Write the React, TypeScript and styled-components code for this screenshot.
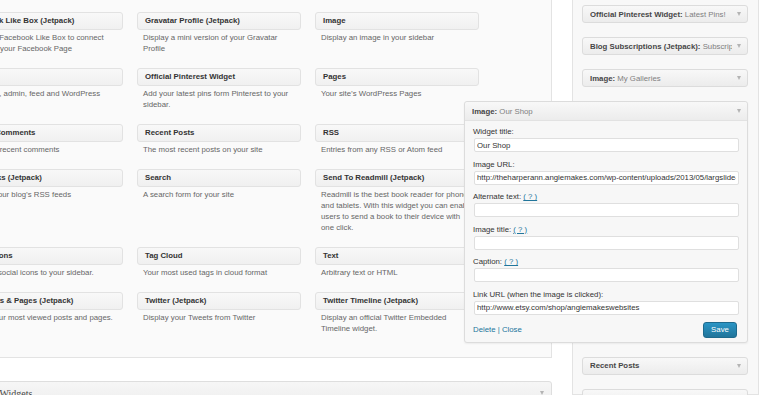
import React from "react";
import styled, { createGlobalStyle } from "styled-components";

const GlobalStyles = createGlobalStyle`
  html, body {
    margin: 0;
    padding: 0;
    background: #fff;
  }
  body {
    font-family: "Liberation Sans", Arial, sans-serif;
    font-size: 7.8px;
    color: #333;
    overflow: hidden;
  }
`;

type Widget = { title: string; desc: string };

const availableWidgets: Widget[] = [
  { title: "Facebook Like Box (Jetpack)", desc: "Display a Facebook Like Box to connect visitors to your Facebook Page" },
  { title: "Gravatar Profile (Jetpack)", desc: "Display a mini version of your Gravatar Profile" },
  { title: "Image", desc: "Display an image in your sidebar" },
  { title: "Meta", desc: "Log in/out, admin, feed and WordPress links" },
  { title: "Official Pinterest Widget", desc: "Add your latest pins form Pinterest to your sidebar." },
  { title: "Pages", desc: "Your site\u2019s WordPress Pages" },
  { title: "Recent Comments", desc: "The most recent comments" },
  { title: "Recent Posts", desc: "The most recent posts on your site" },
  { title: "RSS", desc: "Entries from any RSS or Atom feed" },
  { title: "RSS Links (Jetpack)", desc: "Links to your blog\u2019s RSS feeds" },
  { title: "Search", desc: "A search form for your site" },
  {
    title: "Send To Readmill (Jetpack)",
    desc: "Readmill is the best book reader for phones and tablets. With this widget you can enable users to send a book to their device with one click."
  },
  { title: "Social Icons", desc: "Adds the social icons to your sidebar." },
  { title: "Tag Cloud", desc: "Your most used tags in cloud format" },
  { title: "Text", desc: "Arbitrary text or HTML" },
  { title: "Top Posts & Pages (Jetpack)", desc: "Shows your most viewed posts and pages." },
  { title: "Twitter (Jetpack)", desc: "Display your Tweets from Twitter" },
  { title: "Twitter Timeline (Jetpack)", desc: "Display an official Twitter Embedded Timeline widget." }
];

type Field = { label: string; help?: boolean; value: string };

const imageFields: Field[] = [
  { label: "Widget title:", value: "Our Shop" },
  { label: "Image URL:", value: "http://theharperann.angiemakes.com/wp-content/uploads/2013/05/largslide-shop.jpg" },
  { label: "Alternate text:", help: true, value: "" },
  { label: "Image title:", help: true, value: "" },
  { label: "Caption:", help: true, value: "" },
  { label: "Link URL (when the image is clicked):", value: "http://www.etsy.com/shop/angiemakeswebsites" }
];

const App = () => (
  <>
    <GlobalStyles />
    <Page>
      <LeftColumn>
        <WidgetPanel>
          <WidgetGrid>
            {availableWidgets.map((w) => (
              <WidgetCard key={w.title}>
                <WidgetTitle>{w.title}</WidgetTitle>
                <WidgetDesc>{w.desc}</WidgetDesc>
              </WidgetCard>
            ))}
          </WidgetGrid>
        </WidgetPanel>

        <InactiveBar>
          <InactiveTitle>Inactive Widgets</InactiveTitle>
          <Arrow />
        </InactiveBar>
      </LeftColumn>

      <Sidebar>
        <SidebarWidget>
          <SidebarTitle>
            <b>Official Pinterest Widget:</b> <Sub>Latest Pins!</Sub>
          </SidebarTitle>
          <Arrow />
        </SidebarWidget>
        <SidebarWidget>
          <SidebarTitle>
            <b>Blog Subscriptions (Jetpack):</b> <Sub>Subscriptions</Sub>
          </SidebarTitle>
          <Arrow />
        </SidebarWidget>
        <SidebarWidget>
          <SidebarTitle>
            <b>Image:</b> <Sub>My Galleries</Sub>
          </SidebarTitle>
          <Arrow />
        </SidebarWidget>

        <OpenWidget>
          <OpenWidgetHeader>
            <SidebarTitle>
              <b>Image:</b> <Sub>Our Shop</Sub>
            </SidebarTitle>
            <Arrow />
          </OpenWidgetHeader>
          <OpenWidgetBody>
            {imageFields.map((f) => (
              <FieldRow key={f.label}>
                <FieldLabel>
                  {f.label}
                  {f.help && (
                    <>
                      {" "}
                      <HelpLink href="#">( ? )</HelpLink>
                    </>
                  )}
                </FieldLabel>
                <FieldInput type="text" defaultValue={f.value} readOnly />
              </FieldRow>
            ))}
            <Actions>
              <ActionLinks>
                <ActionLink href="#">Delete</ActionLink> | <ActionLink href="#">Close</ActionLink>
              </ActionLinks>
              <SaveButton>Save</SaveButton>
            </Actions>
          </OpenWidgetBody>
        </OpenWidget>

        <SidebarWidget>
          <SidebarTitle>
            <b>Recent Posts</b>
          </SidebarTitle>
          <Arrow />
        </SidebarWidget>
        <SidebarWidget>
          <SidebarTitle>
            <b>Text:</b> <Sub>About</Sub>
          </SidebarTitle>
          <Arrow />
        </SidebarWidget>
      </Sidebar>
    </Page>
  </>
);
export default App;

const Page = styled.div`
  display: flex;
  align-items: flex-start;
  width: 768px;
  height: 395px;
  overflow: hidden;
  background: #fff;
`;

const LeftColumn = styled.div`
  flex: none;
  display: flex;
  flex-direction: column;
  width: 601px;
  margin-left: -49px;
`;

const WidgetPanel = styled.div`
  flex: none;
  box-sizing: border-box;
  height: 358px;
  padding: 12px 0 0 7px;
  background: #fafafa;
  border: 1px solid #e3e3e3;
  border-top: none;
`;

const WidgetGrid = styled.div`
  display: grid;
  grid-template-columns: repeat(3, 164px);
  column-gap: 14px;
  align-items: start;
`;

const WidgetCard = styled.div`
  padding-bottom: 14px;
`;

const WidgetTitle = styled.div`
  box-sizing: border-box;
  height: 18px;
  padding: 0 7px;
  line-height: 16px;
  font-weight: bold;
  color: #333;
  white-space: nowrap;
  overflow: hidden;
  background: linear-gradient(#f8f8f8, #f0f0f0);
  border: 1px solid #e2e2e2;
  border-radius: 3px;
`;

const WidgetDesc = styled.div`
  width: 152.6px;
  margin: 2px 0 0 6px;
  line-height: 11px;
  color: #666;
`;

const Arrow = styled.span`
  flex: none;
  width: 0;
  height: 0;
  margin-left: 5px;
  border-left: 2.5px solid transparent;
  border-right: 2.5px solid transparent;
  border-top: 4px solid #b4b4b4;
`;

const InactiveBar = styled.div`
  flex: none;
  display: flex;
  align-items: center;
  box-sizing: border-box;
  height: 30px;
  margin-top: 23px;
  padding: 0 7px 6px 13px;
  background: linear-gradient(#f6f6f6, #ececec);
  border: 1px solid #dedede;
  border-radius: 3px 3px 0 0;
`;

const InactiveTitle = styled.div`
  flex: 1;
  font-family: "Liberation Serif", "Times New Roman", serif;
  font-size: 10px;
  color: #464646;
`;

const Sidebar = styled.div`
  flex: none;
  box-sizing: border-box;
  display: flex;
  flex-direction: column;
  gap: 14px;
  width: 187px;
  height: 395px;
  margin-left: 20px;
  padding: 5px 10px 0 9px;
  background: #f8f8f8;
  border: 1px solid #e3e3e3;
  border-top: none;

  & > * {
    flex-shrink: 0;
  }
`;

const SidebarWidget = styled.div`
  box-sizing: border-box;
  display: flex;
  align-items: center;
  height: 18px;
  padding: 0 6px 0 7px;
  background: linear-gradient(#f8f8f8, #ececec);
  border: 1px solid #dcdcdc;
  border-radius: 3px;
`;

const SidebarTitle = styled.div`
  flex: 1;
  min-width: 0;
  overflow: hidden;
  white-space: nowrap;
  color: #464646;

  b {
    font-weight: bold;
  }
`;

const Sub = styled.span`
  color: #808080;
`;

const OpenWidget = styled.div`
  position: relative;
  z-index: 2;
  box-sizing: border-box;
  width: 284px;
  margin-left: -118px;
  background: #f7f7f7;
  border: 1px solid #dcdcdc;
  border-radius: 3px;
  box-shadow: 0 1px 2px rgba(0, 0, 0, 0.06);
`;

const OpenWidgetHeader = styled.div`
  box-sizing: border-box;
  display: flex;
  align-items: center;
  height: 19px;
  padding: 0 6px 0 7px;
  background: linear-gradient(#f8f8f8, #ececec);
  border-bottom: 1px solid #e2e2e2;
  border-radius: 3px 3px 0 0;
`;

const OpenWidgetBody = styled.div`
  display: flex;
  flex-direction: column;
  padding: 5px 9px 4px 8px;
`;

const FieldRow = styled.div`
  display: flex;
  flex-direction: column;
  margin-bottom: 6.6px;
`;

const FieldLabel = styled.label`
  line-height: 11px;
  color: #333;
`;

const HelpLink = styled.a`
  color: #21759b;
  text-decoration: underline;
`;

const FieldInput = styled.input`
  box-sizing: border-box;
  width: 100%;
  height: 14px;
  margin: 1px 0 0 1px;
  padding: 0 2px;
  font-family: "Liberation Sans", Arial, sans-serif;
  font-size: 7.8px;
  color: #333;
  background: #fff;
  border: 1px solid #dfdfdf;
  border-radius: 2px;
  outline: none;
`;

const Actions = styled.div`
  display: flex;
  align-items: center;
  justify-content: space-between;
  margin-top: 0.4px;
`;

const ActionLinks = styled.div`
  color: #21759b;
`;

const ActionLink = styled.a`
  color: #21759b;
  text-decoration: none;
`;

const SaveButton = styled.button`
  box-sizing: border-box;
  width: 34px;
  height: 16px;
  margin-right: 1px;
  padding: 0;
  font-family: "Liberation Sans", Arial, sans-serif;
  font-size: 7.8px;
  color: #fff;
  background: linear-gradient(#2a95c5, #21759b);
  border: 1px solid #1e6a8d;
  border-radius: 3px;
`;
